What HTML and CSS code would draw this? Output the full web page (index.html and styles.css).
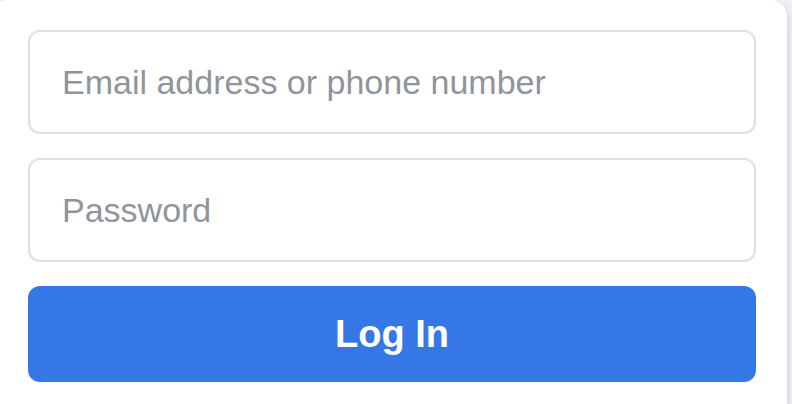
FILE: index.html
```html
<!DOCTYPE html>
<html lang="en">

<head>
  <meta charset="UTF-8" />
  <meta name="viewport" content="width=device-width, initial-scale=1.0" />
  <title>Log In</title>
  <link rel="stylesheet" href="styles.css">
</head>

<body>
  <div class="login-card">
    <form class="login-form" onsubmit="return false">
      <input type="text" class="field" placeholder="Email address or phone number" />
      <input type="password" class="field" placeholder="Password" />
      <button type="submit" class="login-btn">Log In</button>
    </form>
  </div>
</body>

</html>
```

FILE: styles.css
```css
* {
  box-sizing: border-box;
}

body {
  margin: 0;
  background: #f0f2f5;
  font-family: "Liberation Sans", Arial, sans-serif;
  overflow: hidden;
}

.login-card {
  background: #fff;
  width: 795px;
  margin-left: -8px;
  border-radius: 16px;
  box-shadow: 0 4px 16px rgba(0, 0, 0, 0.1), 0 2px 4px rgba(0, 0, 0, 0.1);
  padding: 30px 31px 40px 36px;
}

.login-form {
  display: flex;
  flex-direction: column;
  gap: 24px;
}

.field {
  height: 104px;
  border: 2px solid #dddfe2;
  border-radius: 12px;
  padding: 0 32px;
  font-size: 34px;
  font-family: inherit;
  color: #1d2129;
  outline: none;
}

.field::placeholder {
  color: #90949c;
}

.login-btn {
  height: 96px;
  border: none;
  border-radius: 12px;
  background: #3578e5;
  color: #fff;
  font-size: 38px;
  font-weight: bold;
  font-family: inherit;
  cursor: pointer;
}
```
